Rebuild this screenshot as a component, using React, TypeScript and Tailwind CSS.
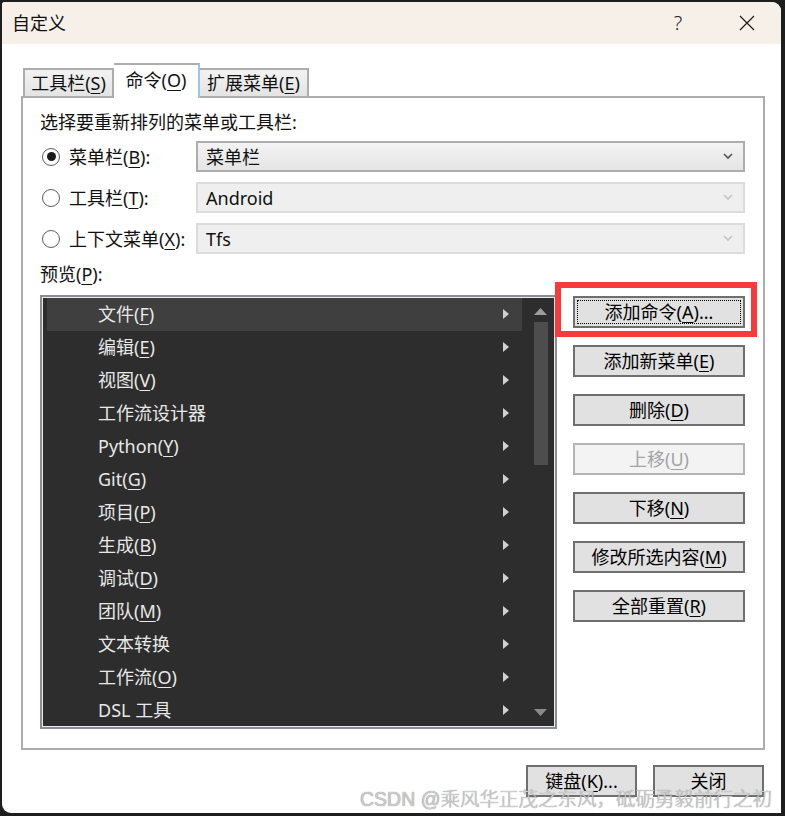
import React from "react";

const rows: [string, string?][] = [
  ["文件", "F"],
  ["编辑", "E"],
  ["视图", "V"],
  ["工作流设计器"],
  ["Python", "Y"],
  ["Git", "G"],
  ["项目", "P"],
  ["生成", "B"],
  ["调试", "D"],
  ["团队", "M"],
  ["文本转换"],
  ["工作流", "O"],
  ["DSL 工具"],
];

function Mn({ c }: { c: string }) {
  return <span className="underline decoration-1 underline-offset-[3px]">{c}</span>;
}

function Lbl({ t, k, tail }: { t: string; k?: string; tail?: string }) {
  return (
    <>
      {t}
      {k && (
        <>
          (<Mn c={k} />)
        </>
      )}
      {tail}
    </>
  );
}

function Chevron({ dim }: { dim?: boolean }) {
  return (
    <svg width="10" height="7" viewBox="0 0 10 7" className="shrink-0">
      <polyline
        points="1,1 5,5 9,1"
        fill="none"
        stroke={dim ? "#c4c4c4" : "#555"}
        strokeWidth="1.6"
      />
    </svg>
  );
}

function RadioRow({ label, k, value, checked }: { label: string; k: string; value: string; checked?: boolean }) {
  return (
    <div className="flex items-center h-[31px]">
      <div className="w-[156px] flex items-center shrink-0">
        <div className="ml-[2px] w-[18px] h-[18px] rounded-full border-[1.5px] border-[#5c5c5c] flex items-center justify-center bg-white">
          {checked && <div className="w-[9px] h-[9px] rounded-full bg-[#1a1a1a]" />}
        </div>
        <span className="ml-[9px] leading-[24px]">
          <Lbl t={label} k={k} tail=":" />
        </span>
      </div>
      <div
        className={
          checked
            ? "flex-1 h-full border-2 border-[#adadad] bg-gradient-to-b from-[#f3f3f3] to-[#e5e5e5] flex items-center justify-between pl-[8px] pr-[10px]"
            : "flex-1 h-full border-2 border-[#dcdcdc] bg-[#efefef] flex items-center justify-between pl-[8px] pr-[10px]"
        }
      >
        <span className="leading-[24px]">{value}</span>
        <Chevron dim={!checked} />
      </div>
    </div>
  );
}

function Btn({ children, disabled, focus, className }: { children: React.ReactNode; disabled?: boolean; focus?: boolean; className?: string }) {
  return (
    <div
      className={
        (disabled
          ? "border-[#b4b4b4] bg-[#f3f3f3] text-[#a3a3a3] "
          : "border-[#6f6f6f] bg-[#e1e1e1] text-black ") +
        "relative h-[32px] border-2 flex items-center justify-center leading-[24px] " +
        (className ?? "")
      }
    >
      {focus && <div className="absolute inset-[2px] border border-dotted border-black" />}
      <span className="relative">{children}</span>
    </div>
  );
}

export default function App() {
  return (
    <div className="w-[785px] h-[816px] bg-[#1e1e1e] pl-[2px] pt-[2px] pr-[4px] pb-[3px] font-['Noto_Sans','Noto_Sans_CJK_SC',sans-serif] text-[18px] text-[#111]">
      <div className="relative w-full h-full bg-white rounded-tr-[9px] rounded-bl-[9px] rounded-tl-[3px] overflow-hidden flex flex-col">
        {/* title bar */}
        <div className="h-[42px] bg-[#f7f0e8] flex items-center pl-[10px] pr-[11px] shrink-0">
          <span className="flex-1 leading-[24px]">自定义</span>
          <span className="w-[46px] text-center font-light text-[20px] leading-[24px] text-[#222]">?</span>
          <span className="ml-[23px] w-[46px] flex justify-center">
            <svg width="16" height="16" viewBox="0 0 16 16">
              <path d="M1 1 L15 15 M15 1 L1 15" stroke="#1a1a1a" strokeWidth="1.2" />
            </svg>
          </span>
        </div>

        {/* body */}
        <div className="flex flex-col pl-[19px] pr-[16px] pt-[19px]">
          {/* tabs */}
          <div className="relative z-10 flex items-end h-[35px] pl-[2px] -mb-[2px]">
            <div className="w-[91px] h-[28px] mb-[2px] border-2 border-b-0 border-[#adadad] bg-gradient-to-b from-[#f2f2f2] to-[#e4e4e4] flex items-center justify-center leading-[24px]">
              <Lbl t="工具栏" k="S" />
            </div>
            <div className="w-[86px] h-[35px] border-2 border-b-0 border-l-0 border-[#adadad] border-r-[#9ec4e8] bg-white flex items-center justify-center pb-[3px] leading-[24px]">
              <Lbl t="命令" k="O" />
            </div>
            <div className="w-[109px] h-[28px] mb-[2px] border-2 border-b-0 border-l-0 border-[#adadad] bg-gradient-to-b from-[#f2f2f2] to-[#e4e4e4] flex items-center justify-center leading-[24px]">
              <Lbl t="扩展菜单" k="E" />
            </div>
          </div>

          {/* panel */}
          <div className="h-[654px] border-2 border-[#adadad] flex flex-col pl-[17px] pr-[18px]">
            <div className="mt-[12px] h-[24px] leading-[24px]">选择要重新排列的菜单或工具栏:</div>
            <div className="mt-[7px] flex flex-col gap-[10px]">
              <RadioRow label="菜单栏" k="B" value="菜单栏" checked />
              <RadioRow label="工具栏" k="T" value="Android" />
              <RadioRow label="上下文菜单" k="X" value="Tfs" />
            </div>
            <div className="mt-[8px] h-[24px] leading-[24px]">
              <Lbl t="预览" k="P" tail=":" />
            </div>

            <div className="mt-[9px] flex gap-[16px]">
              {/* preview list */}
              <div className="w-[517px] h-[434px] border-2 border-[#8a8c97] bg-[#ececec] p-px">
                <div className="h-full bg-[#2d2d2d] flex px-[4px]">
                  <div className="w-[475px] flex flex-col">
                    {rows.map(([t, k], i) => (
                      <div
                        key={t}
                        className={
                          (i === 0 ? "bg-[#3f3f3f] " : "") +
                          "h-[33px] shrink-0 flex items-center justify-between pl-[51px] pr-[13px] pb-px text-[#e8e8e8] leading-[24px]"
                        }
                      >
                        <span>
                          <Lbl t={t} k={k} />
                        </span>
                        <svg width="6" height="10" viewBox="0 0 6 10">
                          <polygon points="0,0 6,5 0,10" fill="#d0d0d0" />
                        </svg>
                      </div>
                    ))}
                  </div>
                  <div className="ml-[11px] w-[15px] flex flex-col items-center pt-[10px] pb-[10px]">
                    <svg width="13" height="7" viewBox="0 0 13 7">
                      <polygon points="0,7 6.5,0 13,7" fill="#9d9d9d" />
                    </svg>
                    <div className="mt-[7px] w-[14px] h-[143px] bg-[#4d4d4d]" />
                    <div className="flex-1" />
                    <svg width="13" height="7" viewBox="0 0 13 7">
                      <polygon points="0,0 13,0 6.5,7" fill="#8a8a8a" />
                    </svg>
                  </div>
                </div>
              </div>

              {/* buttons */}
              <div className="w-[172px] pt-px flex flex-col gap-[17px]">
                <div className="relative">
                  <Btn focus>
                    <Lbl t="添加命令" k="A" tail="..." />
                  </Btn>
                  <div className="absolute -left-[18px] -right-[12px] -top-[14px] -bottom-[9px] border-[6px] border-[#f83a3a]" />
                </div>
                <Btn>
                  <Lbl t="添加新菜单" k="E" />
                </Btn>
                <Btn>
                  <Lbl t="删除" k="D" />
                </Btn>
                <Btn disabled>
                  <Lbl t="上移" k="U" />
                </Btn>
                <Btn>
                  <Lbl t="下移" k="N" />
                </Btn>
                <Btn>
                  <Lbl t="修改所选内容" k="M" />
                </Btn>
                <Btn>
                  <Lbl t="全部重置" k="R" />
                </Btn>
              </div>
            </div>
          </div>

          {/* footer buttons */}
          <div className="mt-[15px] flex justify-end gap-[16px] pr-px">
            <Btn className="w-[111px]">
              <Lbl t="键盘" k="K" tail="..." />
            </Btn>
            <Btn className="w-[111px]">关闭</Btn>
          </div>
        </div>

        {/* watermark */}
        <div className="absolute left-[358px] top-[784px] leading-[26px] text-[19.5px] font-light text-[#cdcdcd] font-['Liberation_Sans','Noto_Sans_CJK_SC',sans-serif] [text-shadow:0_0_1px_#777] whitespace-nowrap">
          CSDN @乘风华正茂之东风，砥砺勇毅前行之初
        </div>
      </div>
    </div>
  );
}
